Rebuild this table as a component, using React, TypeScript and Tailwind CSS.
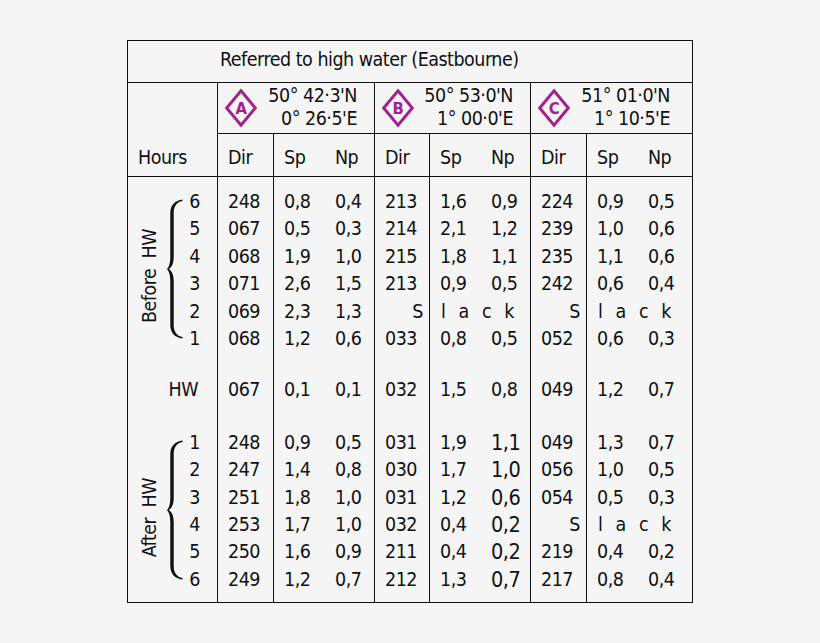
import type { ReactNode } from 'react';

type Cell = [string, string, string] | 'slack';

interface Station {
  letter: string;
  lat: string;
  lon: string;
  before: Cell[];
  hw: Cell;
  after: Cell[];
  bigAfter?: boolean;
  dirW: string;
  spW: string;
  pr: string;
}

const MAGENTA = '#a3218e';

const stations: Station[] = [
  {
    letter: 'A',
    lat: "50° 42·3'N",
    lon: "0° 26·5'E",
    before: [
      ['248', '0,8', '0,4'],
      ['067', '0,5', '0,3'],
      ['068', '1,9', '1,0'],
      ['071', '2,6', '1,5'],
      ['069', '2,3', '1,3'],
      ['068', '1,2', '0,6'],
    ],
    hw: ['067', '0,1', '0,1'],
    after: [
      ['248', '0,9', '0,5'],
      ['247', '1,4', '0,8'],
      ['251', '1,8', '1,0'],
      ['253', '1,7', '1,0'],
      ['250', '1,6', '0,9'],
      ['249', '1,2', '0,7'],
    ],
    dirW: 'w-[56px]',
    spW: 'w-[101px] border-r',
    pr: 'pr-[17px]',
  },
  {
    letter: 'B',
    lat: "50° 53·0'N",
    lon: "1° 00·0'E",
    before: [
      ['213', '1,6', '0,9'],
      ['214', '2,1', '1,2'],
      ['215', '1,8', '1,1'],
      ['213', '0,9', '0,5'],
      'slack',
      ['033', '0,8', '0,5'],
    ],
    hw: ['032', '1,5', '0,8'],
    after: [
      ['031', '1,9', '1,1'],
      ['030', '1,7', '1,0'],
      ['031', '1,2', '0,6'],
      ['032', '0,4', '0,2'],
      ['211', '0,4', '0,2'],
      ['212', '1,3', '0,7'],
    ],
    bigAfter: true,
    dirW: 'w-[55px]',
    spW: 'w-[101px] border-r',
    pr: 'pr-[17px]',
  },
  {
    letter: 'C',
    lat: "51° 01·0'N",
    lon: "1° 10·5'E",
    before: [
      ['224', '0,9', '0,5'],
      ['239', '1,0', '0,6'],
      ['235', '1,1', '0,6'],
      ['242', '0,6', '0,4'],
      'slack',
      ['052', '0,6', '0,3'],
    ],
    hw: ['049', '1,2', '0,7'],
    after: [
      ['049', '1,3', '0,7'],
      ['056', '1,0', '0,5'],
      ['054', '0,5', '0,3'],
      'slack',
      ['219', '0,4', '0,2'],
      ['217', '0,8', '0,4'],
    ],
    dirW: 'w-[56px]',
    spW: 'w-[105px]',
    pr: 'pr-[22px]',
  },
];

function Row({ children }: { children?: ReactNode }) {
  return <div className="h-[27.4px] flex items-center leading-none whitespace-nowrap">{children}</div>;
}

function Diamond({ letter }: { letter: string }) {
  return (
    <svg width="34" height="40" viewBox="0 0 34 40" className="shrink-0">
      <polygon
        points="17,2.8 31.3,20 17,37.2 2.7,20"
        fill="none"
        stroke={MAGENTA}
        strokeWidth="3"
        strokeLinejoin="miter"
      />
      <text
        x="17"
        y="20.5"
        textAnchor="middle"
        dominantBaseline="central"
        fill={MAGENTA}
        fontWeight="bold"
        fontSize="16.5"
        fontFamily="'DejaVu Sans Condensed', sans-serif"
      >
        {letter}
      </text>
    </svg>
  );
}

function Brace() {
  return (
    <svg width="16" height="140" viewBox="0 0 16 140" className="shrink-0">
      <path
        d="M15.5 0.5 C8 1.5 3.3 6 3.3 14 L3.3 58 C3.3 64 2 68 0 70 C2 72 3.3 76 3.3 82 L3.3 126 C3.3 134 8 138.5 15.5 139.5 L15.5 138 C10 137 6.7 133 6.7 126 L6.7 82 C6.7 76 5 72 1.8 70 C5 68 6.7 64 6.7 58 L6.7 14 C6.7 7 10 3 15.5 2 Z"
        fill="#111"
      />
    </svg>
  );
}

function HoursBlock({ label, nums }: { label: string; nums: string[] }) {
  return (
    <div className="h-[164.4px] flex">
      <div className="ml-[10px] w-[24px] flex items-center justify-center pt-[12px]">
        <span className="[writing-mode:vertical-rl] rotate-180 whitespace-pre leading-none">{label}</span>
      </div>
      <div className="ml-[5px] flex items-center pb-[2px]">
        <Brace />
      </div>
      <div className="w-[17px] flex flex-col">
        {nums.map((n) => (
          <Row key={n}>
            <span className="ml-auto">{n}</span>
          </Row>
        ))}
      </div>
    </div>
  );
}

function DirColumn({ s }: { s: Station }) {
  const cell = (c: Cell, i: number) => (
    <Row key={i}>
      {c === 'slack' ? (
        <span className="ml-auto pr-[6px]">S</span>
      ) : (
        <span className="pl-[10px]">{c[0]}</span>
      )}
    </Row>
  );
  return (
    <div className={`${s.dirW} border-r border-[#111] pt-[11px]`}>
      {s.before.map(cell)}
      <div className="h-[23.6px]" />
      {cell(s.hw, 99)}
      <div className="h-[25.6px]" />
      {s.after.map(cell)}
    </div>
  );
}

function SpNpColumn({ s }: { s: Station }) {
  const cell = (c: Cell, i: number, big = false) => (
    <Row key={i}>
      {c === 'slack' ? (
        <div className="w-[84px] pl-[11px] flex justify-between">
          <span>l</span>
          <span>a</span>
          <span>c</span>
          <span>k</span>
        </div>
      ) : (
        <>
          <span className="pl-[10px] w-[61px]">{c[1]}</span>
          <span className={big ? 'text-[21.5px]' : ''}>{c[2]}</span>
        </>
      )}
    </Row>
  );
  return (
    <div className={`${s.spW} border-[#111] pt-[11px]`}>
      {s.before.map((c, i) => cell(c, i))}
      <div className="h-[23.6px]" />
      {cell(s.hw, 99)}
      <div className="h-[25.6px]" />
      {s.after.map((c, i) => cell(c, i, s.bigAfter))}
    </div>
  );
}

export default function App() {
  return (
    <div className="min-h-screen bg-[#f5f5f5] pt-[40px] pl-[127px] text-[#111] text-[19.5px] tracking-[-0.5px] font-['DejaVu_Sans_Condensed','DejaVu_Sans',sans-serif]">
      <div className="w-[566px] border border-[#111]">
        <div className="h-[42px] border-b border-[#111] flex items-center pl-[92px] pb-[3px] whitespace-nowrap">
          Referred to high water (Eastbourne)
        </div>

        <div className="flex border-b border-[#111]">
          <div className="w-[90px] border-r border-[#111] flex items-end">
            <div className="h-[42px] flex items-center pl-[10px] pt-[5px]">Hours</div>
          </div>
          {stations.map((s) => (
            <div
              key={s.letter}
              className={`flex flex-col ${s.letter === 'C' ? 'w-[161px]' : s.letter === 'B' ? 'w-[156px] border-r border-[#111]' : 'w-[157px] border-r border-[#111]'}`}
            >
              <div className="h-[51px] border-b border-[#111] flex items-center pl-[6px]">
                <Diamond letter={s.letter} />
                <div className={`flex-1 text-right leading-[22.6px] whitespace-nowrap ${s.pr}`}>
                  <div>{s.lat}</div>
                  <div>{s.lon}</div>
                </div>
              </div>
              <div className="h-[42px] flex">
                <div className={`${s.dirW} border-r border-[#111] flex items-center pl-[10px] pt-[5px]`}>Dir</div>
                <div className="flex-1 flex items-center pt-[5px]">
                  <span className="pl-[10px] w-[61px]">Sp</span>
                  <span>Np</span>
                </div>
              </div>
            </div>
          ))}
        </div>

        <div className="flex h-[425px]">
          <div className="w-[90px] border-r border-[#111] pt-[11px]">
            <HoursBlock label={'Before  HW'} nums={['6', '5', '4', '3', '2', '1']} />
            <div className="h-[23.6px]" />
            <Row>
              <span className="ml-auto mr-[19px]">HW</span>
            </Row>
            <div className="h-[25.6px]" />
            <HoursBlock label={'After  HW'} nums={['1', '2', '3', '4', '5', '6']} />
          </div>
          {stations.map((s) => (
            <div key={s.letter} className="flex">
              <DirColumn s={s} />
              <SpNpColumn s={s} />
            </div>
          ))}
        </div>
      </div>
    </div>
  );
}
